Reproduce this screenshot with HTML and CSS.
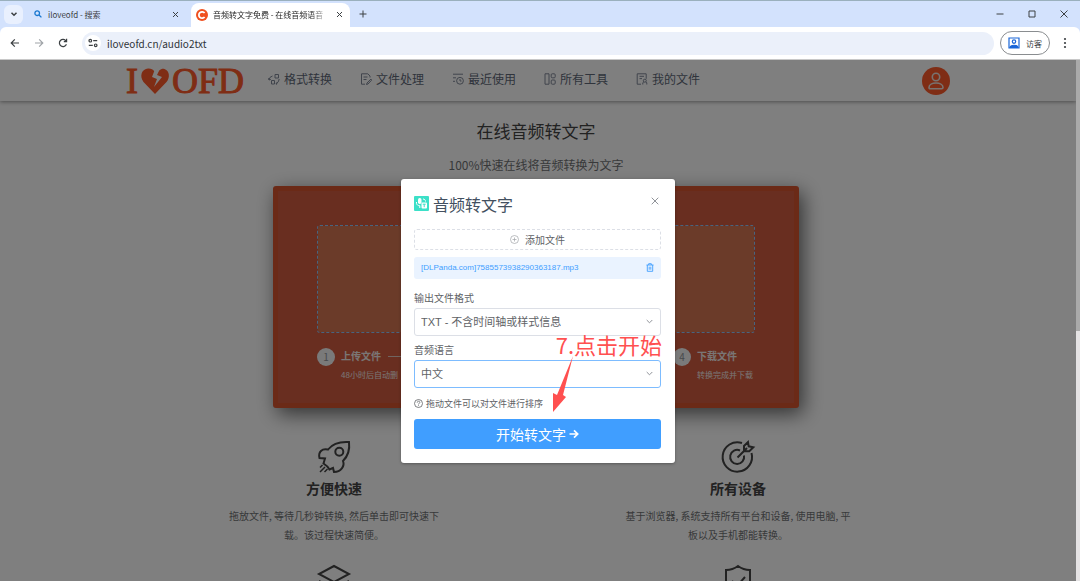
FILE: index.html
```html
<!DOCTYPE html>
<html lang="zh-CN">
<head>
<meta charset="UTF-8">
<title>音频转文字免费 - 在线音频语音转文字</title>
<link rel="stylesheet" href="styles.css">
</head>
<body>
	<div class="browser">
		<div class="tabs">
			<button class="tab-search" aria-label="搜索标签页"><svg width="8" height="8" viewBox="0 0 8 8"><path d="M1.5 2.7 4 5.2 6.5 2.7" /></svg></button>
			<div class="tab">
				<svg class="blue" width="8" height="8" viewBox="0 0 8 8"><circle cx="3.2" cy="3.2" r="2.3" /><path d="M5 5l2.4 2.4" /></svg>
				<span class="tab-title">iloveofd - 搜索</span>
				<button aria-label="关闭"><svg width="7" height="7" viewBox="0 0 7 7"><path d="M1 1l5 5M6 1 1 6" /></svg></button>
			</div>
			<div class="tab active">
				<svg class="favicon" width="12" height="12" viewBox="0 0 12 12"><circle cx="6" cy="6" r="6" /><path d="M8.6 4A3.2 3.2 0 1 0 8.6 8" /></svg>
				<span class="tab-title">音频转文字免费 - 在线音频语音</span>
				<button aria-label="关闭"><svg width="7" height="7" viewBox="0 0 7 7"><path d="M1 1l5 5M6 1 1 6" /></svg></button>
			</div>
			<button class="new-tab" aria-label="新标签页"><svg width="8" height="8" viewBox="0 0 8 8"><path d="M4 .5v7M.5 4h7" /></svg></button>
			<div class="window-buttons">
				<button aria-label="最小化"><svg width="8" height="8" viewBox="0 0 8 8"><path d="M.5 4h7" /></svg></button>
				<button aria-label="最大化"><svg width="8" height="8" viewBox="0 0 8 8"><path d="M1 1h6v6H1z" /></svg></button>
				<button aria-label="关闭窗口"><svg width="8" height="8" viewBox="0 0 8 8"><path d="M.5.5l7 7M7.5.5l-7 7" /></svg></button>
			</div>
		</div>
		<div class="toolbar">
			<button aria-label="后退"><svg width="10" height="10" viewBox="0 0 10 10"><path d="M9 5H1.4M4.8 1.4 1.2 5l3.6 3.6" /></svg></button>
			<button class="disabled" aria-label="前进"><svg width="10" height="10" viewBox="0 0 10 10"><path d="M1 5h7.6M5.2 1.4 8.8 5 5.2 8.6" /></svg></button>
			<button aria-label="刷新"><svg width="10" height="10" viewBox="0 0 10 10"><path d="M8.4 6.2A3.6 3.6 0 1 1 8 3M8.6.8v2.8H5.8" /></svg></button>
			<div class="address">
				<span class="site-info"><svg width="10" height="10" viewBox="0 0 10 10"><circle cx="2.3" cy="2.7" r="1.3" /><path d="M5.2 2.7h4M.8 7.3h4" /><circle cx="7.7" cy="7.3" r="1.3" /></svg></span>
				<input type="text" value="iloveofd.cn/audio2txt" aria-label="地址">
			</div>
			<button class="guest"><svg width="12" height="12" viewBox="0 0 12 12"><path d="M1 1h10v10H1z" /><circle cx="6" cy="4.6" r="1.7" /><path class="fill" d="M2 10.5C2.5 7.5 9.5 7.5 10 10.5z" /></svg>访客</button>
			<button class="menu" aria-label="菜单"><svg width="4" height="12" viewBox="0 0 4 12"><circle cx="2" cy="2" r="1.1" /><circle cx="2" cy="6" r="1.1" /><circle cx="2" cy="10" r="1.1" /></svg></button>
		</div>
	</div>

	<div class="viewport">
		<div class="page">
			<header class="header">
				<a class="logo" href="#">I<svg width="28" height="26" viewBox="0 0 28 26"><path d="M14 26 2.5 14C-2 8 1 1 7 .6c3-.2 5 1 6.200 2.600L11 9l5 2-3 8 8-10-5-2 2.200-4.600C20 .8 22 .4 23.500 1 29 3 29 10 25.500 14z" /></svg>OFD</a>
				<nav class="nav">
					<a href="#"><svg width="12" height="12" viewBox="0 0 12 12"><path d="M7 1.500h3.500V5H7zM4.500 3A4.500 4.500 0 0 0 1 7M.5 5.200 1 7l1.800-.6M3.500 7.500h3V11h-3zM11.200 6A5 5 0 0 1 8 10.500M9.800 9.800 8 10.500l.5 1.200" /></svg>格式转换</a>
					<a href="#"><svg width="12" height="12" viewBox="0 0 12 12"><path d="M10 4.500V3L7.800.8H1.500v10.400H5M3.500 4h4M3.500 6.500h3M11 6l-4 4-.5 1.500L8 11l3.500-3.700z" /></svg>文件处理</a>
					<a href="#"><svg width="12" height="12" viewBox="0 0 12 12"><path d="M1 1.200h10M1 4.800h3M1 8.300h2" /><circle cx="8" cy="7.800" r="3.400" /><path d="M8 6v2h1.500" /></svg>最近使用</a>
					<a href="#"><svg width="12" height="12" viewBox="0 0 12 12"><path d="M1 .8h4v10.400H1z" /><rect x="7.200" y=".8" width="4" height="4" rx="1" /><rect x="7.200" y="7" width="4" height="4.200" rx="1" /></svg>所有工具</a>
					<a href="#"><svg width="12" height="12" viewBox="0 0 12 12"><path d="M5 11.200H1.200V.8h9v5M3.500 3.300h4.500M3.500 5.600h2.500M6.800 11.500V9.700l1-.7M10.800 11.500V9.700l-1-.7" /><circle cx="8.800" cy="7.700" r="1.500" /></svg>我的文件</a>
				</nav>
				<button class="avatar" aria-label="用户"><svg width="16" height="18" viewBox="0 0 16 18"><circle cx="8" cy="5" r="3.700" /><path d="M1 15.500c0-6 14-6 14 0 0 1-.6 1.300-1.400 1.300H2.400C1.600 16.800 1 16.500 1 15.500z" /></svg></button>
			</header>

			<main class="content">
				<h1>在线音频转文字</h1>
				<p class="subtitle">100%快速在线将音频转换为文字</p>
				<section class="upload">
					<div class="dropzone"></div>
					<ol class="steps">
						<li><span class="number">1</span><div class="step"><h3>上传文件</h3><p>48小时后自动删</p></div></li>
						<li></li>
						<li></li>
						<li><span class="number">4</span><div class="step"><h3>下载文件</h3><p>转换完成并下载</p></div></li>
					</ol>
				</section>
				<section class="features">
					<article>
						<svg width="34" height="34" viewBox="0 0 34 34"><path d="M2.500 18C1 12 5 8 11 9.500 16 3 24 1.500 32 2c1 8-1 14-6 19 2 5-2 11-9 11l-1-4-3.500 1.500C11 27 9 25 6.500 23.500L8 18.500z" /><circle cx="22.300" cy="11.700" r="4" /><path d="M5.500 25l-2.500 2.500M8 27l-5 5M10.500 29l-3 3" stroke-width="1.500" /></svg>
						<h2>方便快速</h2>
						<p>拖放文件, 等待几秒钟转换, 然后单击即可快速下<br>载。该过程快速简便。</p>
					</article>
					<article>
						<svg width="34" height="34" viewBox="0 0 34 34"><path d="M21 3A14.700 14.700 0 1 0 30.500 13M19 10.500A7 7 0 1 0 23 15.500M16.500 17.500 26 8M23 11V6l4-4 .7 4.300 4.600 1-4 4z" /></svg>
						<h2>所有设备</h2>
						<p>基于浏览器, 系统支持所有平台和设备, 使用电脑, 平<br>板以及手机都能转换。</p>
					</article>
					<article>
						<svg width="34" height="34" viewBox="0 0 34 34"><path d="M17 2 32 10 17 18 2 10zM2 17l15 8 15-8M2 24l15 8 15-8" /></svg>
					</article>
					<article>
						<svg width="34" height="34" viewBox="0 0 34 34"><path d="M17 2c4 3 7 4 12 4v12c0 7-5 11-12 14C10 29 5 25 5 18V6c5 0 8-1 12-4zM11 17l5 5 8-9" /></svg>
					</article>
				</section>
			</main>

			<div class="overlay">
				<form class="dialog" role="dialog" aria-labelledby="dialog-title">
					<div class="dialog-header">
						<svg width="15" height="15" viewBox="0 0 15 15"><rect width="15" height="15" rx="1" fill="#3ce0c8" /><rect x="4" y="2" width="3.500" height="6" rx="1.700" fill="#fff" /><path d="M2.500 6v1.500C3 9 4 9.700 5.800 9.700V12M9 3c1.500 0 2.500 1 2.500 2.500" fill="none" stroke="#fff" /><rect x="7.500" y="6.500" width="5.500" height="6" rx="1" fill="#fff" /><path d="M8.700 8.200h3M10.200 8.200v3" stroke="#3ce0c8" /></svg>
						<h2 id="dialog-title">音频转文字</h2>
						<button type="button" class="close" aria-label="关闭"><svg width="8" height="8" viewBox="0 0 8 8"><path d="M.7.7l6.600 6.600M7.300.7.7 7.300" /></svg></button>
					</div>
					<button type="button" class="add-file"><svg width="9" height="9" viewBox="0 0 9 9"><circle cx="4.500" cy="4.500" r="4" /><path d="M4.500 2.500v4M2.500 4.500h4" /></svg>添加文件</button>
					<div class="file">
						<span>[DLPanda.com]7585573938290363187.mp3</span>
						<button type="button" aria-label="删除"><svg width="8" height="9" viewBox="0 0 8 9"><path d="M.5 2h7M2.700 2V.7h2.600V2M1.300 2v6.300h5.400V2M3.200 3.700v3M4.800 3.700v3" /></svg></button>
					</div>
					<label for="format">输出文件格式</label>
					<div class="select">
						<select id="format"><option>TXT - 不含时间轴或样式信息</option></select>
						<svg width="7" height="5" viewBox="0 0 7 5"><path d="M.7 1 3.500 3.800 6.300 1" /></svg>
					</div>
					<label for="language">音频语言</label>
					<div class="select focused">
						<select id="language"><option>中文</option></select>
						<svg width="7" height="5" viewBox="0 0 7 5"><path d="M.7 1 3.500 3.800 6.300 1" /></svg>
					</div>
					<p class="hint"><svg width="9" height="9" viewBox="0 0 9 9"><circle cx="4.500" cy="4.500" r="4" /><path d="M3.200 3.600C3.200 1.700 5.900 1.800 5.800 3.500 5.700 4.400 4.500 4.400 4.500 5.500M4.500 6.300v.8" /></svg>拖动文件可以对文件进行排序</p>
					<button type="submit" class="start">开始转文字<svg width="10" height="10" viewBox="0 0 10 10"><path d="M.5 5h8M5 1.300 8.700 5 5 8.700" /></svg></button>
					<div class="note">
						<span>7.点击开始</span>
						<svg width="22" height="57" viewBox="0 0 22 57"><path d="M21 0 11 39l3 2L1 56V37l4 2z" /></svg>
					</div>
				</form>
			</div>
		</div>
		<div class="scrollbar"><div class="thumb"></div></div>
	</div>
</body>
</html>
```
FILE: styles.css
```css
* {
	box-sizing: border-box;
}

body {
	margin: 0;
	height: 100vh;
	display: flex;
	flex-direction: column;
	overflow: hidden;
	font-family: "Noto Sans CJK SC", sans-serif;
	font-size: 10px;
	color: #444;
}

h1, h2, h3, p, ol {
	margin: 0;
	padding: 0;
	font-weight: normal;
}

button, input, select {
	font-family: inherit;
	font-size: inherit;
	color: inherit;
	margin: 0;
	padding: 0;
	border: none;
	background: none;
}

button {
	display: flex;
	align-items: center;
	justify-content: center;
}

a {
	color: inherit;
	text-decoration: none;
}

svg {
	flex: none;
	fill: none;
	stroke: currentColor;
	overflow: visible;
}

/* browser window */
.browser {
	flex: none;
	border-top: 1px solid #9ab0bd;
	border-bottom: 1px solid #c8c8c8;
	background: #d3e2fd;
	color: #3c4043;
}

.tabs {
	display: flex;
	align-items: center;
	height: 26px;
	padding-left: 4px;
	font-size: 8px;
}

.tab-search {
	width: 19px;
	height: 19px;
	border-radius: 6px;
	background: #e9f0fe;
}

.tab-search svg {
	stroke-width: 1.5;
}

.tab {
	display: flex;
	align-items: center;
	gap: 6px;
	width: 157px;
	padding: 0 0 0 11px;
}

.tab.active {
	align-self: flex-end;
	width: 159px;
	height: 24px;
	margin-left: 11px;
	padding: 0 6px 1px 5px;
	border-radius: 8px 8px 0 0;
	background: #fff;
	gap: 5px;
}

.tab-title {
	flex: 1;
	overflow: hidden;
	white-space: nowrap;
}

.active .tab-title {
	color: #1f1f1f;
	-webkit-mask-image: linear-gradient(to right, #000 85%, transparent);
	mask-image: linear-gradient(to right, #000 85%, transparent);
}

.tab button {
	width: 10px;
	height: 10px;
}

.blue {
	color: #1a78d0;
	stroke-width: 1.3;
}

.favicon circle {
	fill: #f0501f;
	stroke: none;
}

.favicon path {
	stroke: #fff;
	stroke-width: 1.8;
}

.new-tab {
	width: 26px;
	height: 20px;
}

.window-buttons {
	display: flex;
	margin-left: auto;
}

.window-buttons button {
	width: 32px;
	height: 20px;
}

.toolbar {
	display: flex;
	align-items: center;
	height: 32px;
	padding: 0 9px 0 10px;
	border-radius: 6px 6px 0 0;
	background: #fff;
	gap: 14px;
}

.toolbar svg {
	stroke-width: 1.2;
}

.toolbar .disabled {
	color: #a0a4a8;
}

.address {
	flex: 1;
	display: flex;
	align-items: center;
	gap: 6px;
	height: 23px;
	padding-left: 3px;
	border-radius: 12px;
	background: #ebf0fa;
}

.site-info {
	display: flex;
	align-items: center;
	justify-content: center;
	width: 16px;
	height: 16px;
	border-radius: 50%;
	background: #fff;
}

.address input {
	flex: 1;
	color: #303438;
}

.guest {
	width: 50px;
	height: 24px;
	margin-left: -8px;
	border: 1px solid #8a8d90;
	border-radius: 12px;
	gap: 6px;
	font-size: 8px;
}

.guest svg {
	color: #1a66d8;
}

.guest .fill,
.menu svg {
	fill: currentColor;
}

.menu {
	width: 12px;
	margin-left: -5px;
}

.menu svg {
	stroke: none;
}

/* page */
.viewport {
	flex: 1;
	min-height: 0;
	display: flex;
}

.page {
	flex: 1;
	position: relative;
	overflow: hidden;
	background: #fff;
}

.scrollbar {
	width: 4px;
	background: #e5e3e4;
}

.thumb {
	height: 52%;
	background: #aaa;
}

.header {
	display: flex;
	align-items: center;
	height: 41px;
	padding: 0 126px;
	box-shadow: 0 1px 4px rgba(0, 0, 0, 0.4);
}

.logo {
	display: flex;
	align-items: center;
	gap: 3px;
	font-family: "Liberation Serif", serif;
	font-size: 36px;
	line-height: 40px;
	color: #ff5a2b;
	-webkit-text-stroke: 1px #ff5a2b;
}

.logo svg {
	fill: currentColor;
	stroke: none;
}

.nav {
	display: flex;
	gap: 28px;
	margin-left: 24px;
	padding-bottom: 3px;
	font-size: 12px;
	line-height: 16px;
	color: #606878;
}

.nav a {
	display: flex;
	align-items: center;
	gap: 4px;
}

.nav svg {
	color: #808898;
}

.avatar {
	width: 28px;
	height: 28px;
	margin-left: auto;
	border-radius: 50%;
	background: #ff5a2b;
	color: #f0e6e0;
}

.avatar svg {
	stroke-width: 1.6;
}

.content {
	display: flex;
	flex-direction: column;
	align-items: center;
	padding: 17px 4px 0 0;
}

.content h1 {
	font-size: 17px;
	line-height: 26px;
}

.subtitle {
	margin-top: 12px;
	font-size: 12px;
	line-height: 18px;
	color: #707274;
}

.upload {
	width: 526px;
	height: 222px;
	margin-top: 12px;
	padding: 34px 39px 0;
	border: 5px solid #d6542e;
	border-radius: 3px;
	background: #d25c40;
	box-shadow: 4px 6px 20px rgba(0, 0, 0, 0.6);
}

.dropzone {
	height: 108px;
	border: 1px dashed #90c8ff;
	border-radius: 3px;
	background: #d67652;
	background-clip: padding-box;
}

.steps {
	display: flex;
	margin-top: 15px;
	list-style: none;
	color: #f4ecea;
}

.steps li {
	flex: 1;
	display: flex;
	gap: 6px;
}

.steps li:last-child {
	flex: none;
	min-width: 82px;
}

.number {
	width: 18px;
	height: 18px;
	border-radius: 50%;
	background: #f4f4f4;
	color: #909399;
	line-height: 18px;
	text-align: center;
}

.step {
	flex: 1;
	white-space: nowrap;
}

.step h3 {
	display: flex;
	align-items: center;
	gap: 7px;
	font-size: 10px;
	font-weight: bold;
	line-height: 16px;
}

.steps li:not(:last-child) h3::after {
	content: "";
	flex: 1;
	border-top: 1px solid #e0c8c0;
}

.step p {
	margin-top: 4px;
	font-size: 8px;
	line-height: 14px;
}

.features {
	display: grid;
	grid-template-columns: 404px 404px;
	row-gap: 20px;
	margin-top: 32px;
	text-align: center;
}

.features svg {
	display: block;
	margin: 0 auto;
	stroke-width: 2;
}

.features h2 {
	margin-top: 4px;
	font-size: 14px;
	font-weight: bold;
	line-height: 20px;
}

.features p {
	margin-top: 8px;
	line-height: 19px;
	color: #707274;
}

/* dialog */
.overlay {
	position: absolute;
	inset: 0;
	display: flex;
	align-items: center;
	justify-content: center;
	background: rgba(0, 0, 0, 0.5);
}

.dialog {
	position: relative;
	display: flex;
	flex-direction: column;
	width: 274px;
	padding: 14px 14px 14px 13px;
	border-radius: 3px;
	background: #fff;
	box-shadow: 0 1px 3px rgba(0, 0, 0, 0.3);
	color: #606266;
}

.dialog-header {
	display: flex;
	align-items: center;
	gap: 4px;
	height: 22px;
}

.dialog-header h2 {
	flex: 1;
	font-size: 16px;
	line-height: 22px;
	color: #435060;
}

.dialog-header > svg {
	stroke: none;
}

.close {
	width: 12px;
	height: 12px;
	margin-bottom: 6px;
	color: #909399;
}

.add-file {
	height: 21px;
	margin-top: 14px;
	border: 1px dashed #dcdfe6;
	border-radius: 3px;
	gap: 6px;
}

.add-file svg {
	color: #a0a3a8;
	stroke-width: 0.7;
}

.file {
	display: flex;
	align-items: center;
	justify-content: space-between;
	height: 22px;
	margin-top: 7px;
	padding: 0 7px;
	border-radius: 3px;
	background: #eaf3ff;
	color: #409eff;
	font-family: "Liberation Sans", sans-serif;
	font-size: 8px;
}

.file svg {
	stroke-width: 0.9;
}

.dialog label {
	margin-top: 11px;
	line-height: 15px;
}

.select {
	display: grid;
	align-items: center;
	height: 28px;
	margin-top: 3px;
	border: 1px solid #dcdfe6;
	border-radius: 3px;
}

.dialog .select + label {
	margin-top: 6px;
}

.select.focused {
	border-color: #7dbcff;
}

.select select,
.select svg {
	grid-area: 1 / 1;
}

.select select {
	appearance: none;
	height: 26px;
	padding: 0 20px 0 6px;
	font-family: "Liberation Sans", "Noto Sans CJK SC", sans-serif;
	font-size: 11px;
}

.select svg {
	justify-self: end;
	margin-right: 7px;
	color: #909399;
	pointer-events: none;
}

.hint {
	display: flex;
	align-items: center;
	gap: 3px;
	margin-top: 9px;
	font-size: 9px;
	line-height: 14px;
}

.hint svg {
	stroke-width: 0.8;
}

.start {
	height: 30px;
	margin-top: 8px;
	border-radius: 3px;
	background: #409eff;
	color: #fff;
	font-size: 14px;
	gap: 3px;
}

.start svg {
	stroke-width: 1.7;
}

/* red pointer laid over the form */
.note {
	position: absolute;
	top: 151px;
	right: 13px;
	color: #ff5050;
	font-size: 22px;
	line-height: 28px;
}

.note span {
	display: block;
}

.note svg {
	display: block;
	margin: -2px 0 0 -4px;
	fill: currentColor;
	stroke: none;
}
```
